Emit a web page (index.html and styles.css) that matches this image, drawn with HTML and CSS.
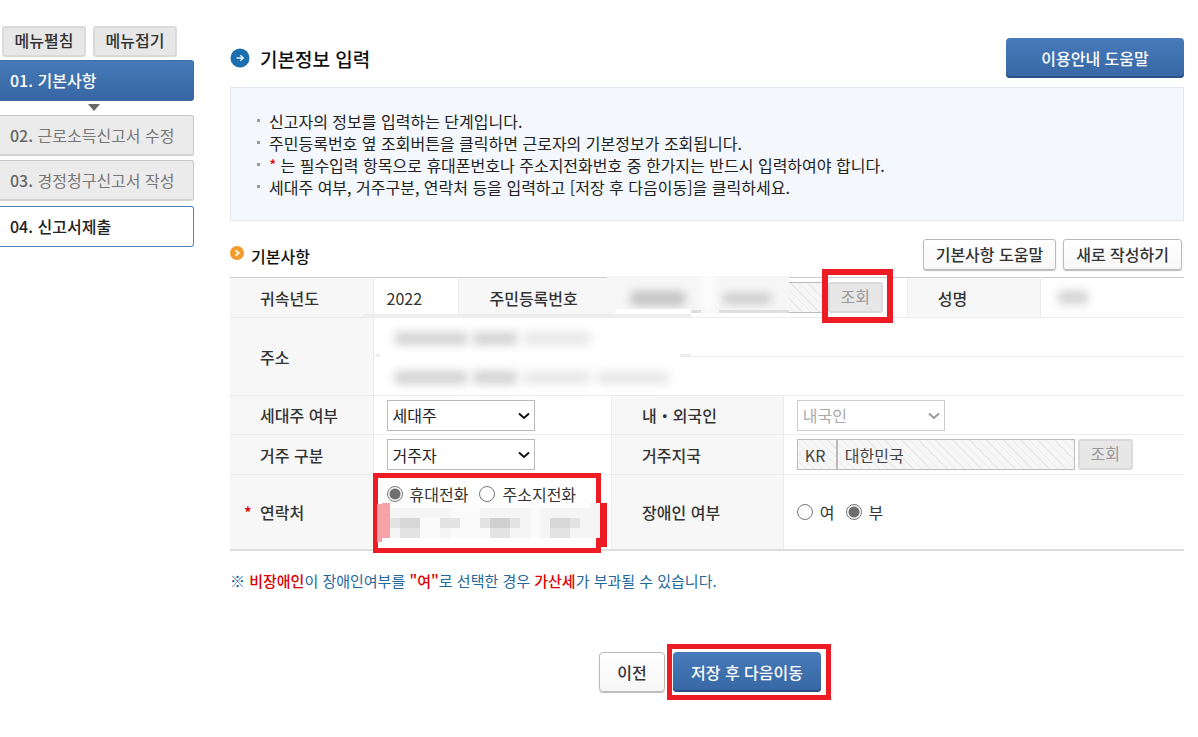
FILE: index.html
```html
<!DOCTYPE html>
<html lang="ko">
<head>
<meta charset="utf-8">
<title>기본정보 입력</title>
<link rel="stylesheet" href="styles.css">
</head>
<body>
<div class="page">
  <nav class="side">
    <div class="side-tools">
      <button type="button" class="btn btn-flat">메뉴펼침</button>
      <button type="button" class="btn btn-flat">메뉴접기</button>
    </div>
    <a class="step step-on" href="#s1">01. 기본사항</a>
    <svg class="step-arrow" width="12" height="7" viewBox="0 0 12 7"><path d="M0 0h12L6 7z" fill="#666"/></svg>
    <a class="step step-off" href="#s2"><b>02.</b> 근로소득신고서 수정</a>
    <a class="step step-off" href="#s3"><b>03.</b> 경정청구신고서 작성</a>
    <a class="step step-next" href="#s4">04. 신고서제출</a>
  </nav>

  <main class="main">
    <header class="title-row">
      <svg width="20" height="20" viewBox="0 0 20 20"><circle cx="10" cy="10" r="9.5" fill="#1b6fae"/><path d="M6.5 10h6.5M10.3 7.2l2.9 2.8-2.9 2.8" fill="none" stroke="#e6f2fa" stroke-width="1.5"/></svg>
      <h1>기본정보 입력</h1>
      <button type="button" class="btn btn-blue btn-help">이용안내 도움말</button>
    </header>

    <ul class="guide">
      <li>신고자의 정보를 입력하는 단계입니다.</li>
      <li>주민등록번호 옆 조회버튼을 클릭하면 근로자의 기본정보가 조회됩니다.</li>
      <li><span class="req">*</span> 는 필수입력 항목으로 휴대폰번호나 주소지전화번호 중 한가지는 반드시 입력하여야 합니다.</li>
      <li>세대주 여부, 거주구분, 연락처 등을 입력하고 [저장 후 다음이동]을 클릭하세요.</li>
    </ul>

    <div class="section-row">
      <svg width="14" height="14" viewBox="0 0 14 14"><circle cx="7" cy="7" r="7" fill="#f59a2b"/><path d="M5.5 4.2L8.7 7 5.5 9.8" fill="none" stroke="#fff3dc" stroke-width="2"/></svg>
      <h2>기본사항</h2>
      <button type="button" class="btn btn-white">기본사항 도움말</button>
      <button type="button" class="btn btn-white">새로 작성하기</button>
    </div>

    <table class="form">
      <colgroup><col class="c1"><col class="c2"><col class="c3"><col class="c4"><col class="c5"><col class="c6"><col class="c7"></colgroup>
      <tr class="roomy">
        <th scope="row">귀속년도</th>
        <td>2022</td>
        <th scope="row">주민등록번호</th>
        <td colspan="2" class="cell-id">
          <div class="id-line">
            <div class="id-field hatch">
              <svg class="id-mask" viewBox="0 0 182 38" width="182" height="38">
                <defs><filter id="soft" x="-20%" y="-60%" width="140%" height="220%"><feGaussianBlur stdDeviation="5 4"/></filter></defs>
                <rect width="182" height="37" fill="#f6f6f6"/>
                <g filter="url(#soft)"><rect x="24" y="15" width="54" height="15" fill="#c6c6c6"/><rect x="116" y="17" width="48" height="11" fill="#cdcdcd"/><rect x="96" width="10" height="34" fill="#fff"/></g>
                <path d="M84 34h10v3H84zM112 34h70v3h-70z" fill="#dedede"/>
              </svg>
            </div>
            <span class="marked"><button type="button" class="btn btn-flat btn-find" disabled>조회</button><i class="mark"></i></span>
          </div>
        </td>
        <th scope="row">성명</th>
        <td><span class="blot blot-name"></span></td>
      </tr>
      <tr>
        <th scope="row" rowspan="2">주소</th>
        <td colspan="6" class="cell-addr">
          <svg class="addr-mask" viewBox="0 0 330 52" width="330" height="52">
            <path d="M254 0h75v5h-75zM18 44h300v8H18z" fill="#fff"/>
            <path d="M1 5h328v4H1zM14 45h4v3h-4zM318 45h11v3h-11z" fill="#ededed"/>
          </svg>
          <div class="blots"><span class="blot b74"></span><span class="blot b44"></span><span class="blot b60 pale"></span></div>
        </td>
      </tr>
      <tr>
        <td colspan="6"><div class="blots"><span class="blot b74"></span><span class="blot b44"></span><span class="blot b60 pale"></span><span class="blot b74 pale"></span></div></td>
      </tr>
      <tr>
        <th scope="row"><label for="head">세대주 여부</label></th>
        <td colspan="2"><span class="pick"><select id="head"><option>세대주</option><option>세대원</option></select><svg viewBox="0 0 12 8" width="12" height="8"><path d="M1 1.5l5 4.5 5-4.5"/></svg></span></td>
        <th scope="row"><label for="nation">내・외국인</label></th>
        <td colspan="3"><span class="pick pick-off"><select id="nation" disabled><option>내국인</option></select><svg viewBox="0 0 12 8" width="12" height="8"><path d="M1 1.5l5 4.5 5-4.5"/></svg></span></td>
      </tr>
      <tr class="roomy">
        <th scope="row"><label for="reside">거주 구분</label></th>
        <td colspan="2"><span class="pick"><select id="reside"><option>거주자</option><option>비거주자</option></select><svg viewBox="0 0 12 8" width="12" height="8"><path d="M1 1.5l5 4.5 5-4.5"/></svg></span></td>
        <th scope="row"><label for="country">거주지국</label></th>
        <td colspan="3">
          <div class="country">
            <input class="hatch code" type="text" value="KR" aria-label="국가코드" readonly><input id="country" class="hatch name" type="text" value="대한민국" readonly>
            <button type="button" class="btn btn-flat btn-find" disabled>조회</button>
          </div>
        </td>
      </tr>
      <tr class="tall">
        <th scope="row"><span class="star">*</span>연락처</th>
        <td colspan="2" class="cell-tel">
          <div class="radios tel-radios">
            <label><input type="radio" name="tel" checked>휴대전화</label>
            <label><input type="radio" name="tel">주소지전화</label>
          </div>
          <i class="mark mark-tel"></i>
          <svg class="tel-mask" viewBox="0 0 230 45" width="230" height="45">
            <path fill="#f5f5f5" d="M12 0h211v35H12z"/>
            <path fill="#fafafa" d="M73 0h30v35H73zM153 0h10v35h-10zM93 15h20v20H93zM53 15h10v20H43V15z"/>
            <path fill="#fcfcfc" d="M12 0h201v5H12z"/>
            <path fill="#f5a3a8" d="M0 1h5V0h8v35H5v4H0z"/>
            <path fill="#d7d7d7" d="M23 15h20v10H23zM173 15h20v10h-20z"/>
            <path fill="#e3e3e3" d="M13 15h10v10H13zM63 15h20v10H63zM103 15h10v10h-10zM133 15h10v10h-10zM193 15h10v10h-10zM23 25h20v10H23zM113 25h20v10h-20zM173 25h20v10h-20z"/>
            <path fill="#cfcfcf" d="M113 15h20v10h-20z"/>
            <path fill="#ed1c24" d="M223 0h7v44h-7z"/>
          </svg>
        </td>
        <th scope="row">장애인 여부</th>
        <td colspan="3">
          <div class="radios">
            <label><input type="radio" name="dis">여</label>
            <label><input type="radio" name="dis" checked>부</label>
          </div>
        </td>
      </tr>
    </table>

    <p class="note">※ <b>비장애인</b>이 장애인여부를 <b>"여"</b>로 선택한 경우 <b>가산세</b>가 부과될 수 있습니다.</p>

    <div class="actions">
      <button type="button" class="btn btn-white btn-big">이전</button>
      <span class="marked"><button type="button" class="btn btn-blue btn-save">저장 후 다음이동</button><i class="mark"></i></span>
    </div>
  </main>
</div>
</body>
</html>
```
FILE: styles.css
```css
* { box-sizing: border-box; }
body {
  margin: 0;
  background: #fff;
  color: #333;
  font-family: "Noto Sans CJK KR", "Noto Sans", sans-serif;
  font-size: 16px;
  line-height: 22px;
}
button, input, select { font: inherit; color: inherit; margin: 0; }
h1, h2, p, ul { margin: 0; padding: 0; }
a { text-decoration: none; }

.page { display: flex; gap: 36px; padding: 26px 14px 36px 0; }

/* side menu */
.side { flex: 0 0 194px; display: flex; flex-direction: column; }
.side-tools { display: flex; gap: 7px; padding-left: 2px; margin-bottom: 3px; }
.side-tools .btn { width: 84px; }
.step {
  height: 41px;
  padding: 0 10px;
  line-height: 39px;
  border: 1px solid #c6c6c6;
  border-left: 0;
  border-radius: 0 3px 3px 0;
  color: #222;
  white-space: nowrap;
}
.step-on { background: linear-gradient(#4579b8, #3766a3); border-color: #3d6ca8; color: #fff; font-weight: 500; }
.step-arrow { align-self: center; margin: 3px 6px 4px 0; }
.step-off { background: #ebebeb; border-bottom: 2px solid #d2d2d2; color: #777; margin-bottom: 4px; }
.step-off b { font-weight: 500; color: #666; }
.step-next { border-color: #5284c0; font-weight: 500; margin-top: 1px; }

/* buttons */
.btn {
  height: 31px;
  padding: 0 0 2px;
  line-height: 22px;
  font-weight: 500;
  border: 1px solid #ccc;
  border-radius: 3px;
  white-space: nowrap;
}
.btn-flat { background: #e7e7e7; border: 2px solid #dadada; color: #333; padding-bottom: 4px; }
.btn-find { width: 55px; color: #999; font-weight: 400; }
.btn-white { background: linear-gradient(#fff, #f7f7f7); border: 1px solid #bbb; box-shadow: 0 1px 1px #bbb; padding: 0 12px 2px; }
.btn-blue { background: linear-gradient(#487bba, #3767a4); border: 0; box-shadow: inset 0 -2px 0 #2a5085; color: #fff; border-radius: 4px; }
.btn-help { width: 178px; height: 40px; padding: 0; }
.btn-big { width: 66px; height: 40px; border-radius: 4px; padding: 0; }
.btn-save { width: 148px; height: 40px; padding: 0; }

/* heading and guide */
.main { flex: 1; min-width: 0; padding-top: 12px; }
.title-row { display: flex; align-items: center; gap: 10px; }
.title-row h1 { flex: 1; padding-top: 2px; font-size: 19px; font-weight: 500; color: #111; }
.guide {
  list-style: none;
  margin-top: 9px;
  padding: 22px 26px;
  background: #f4f7fc;
  border: 1px solid #e2e8f0;
  color: #222;
}
.guide li { display: flex; gap: 4px; white-space: nowrap; }
.guide li::before { content: ""; width: 3px; height: 3px; margin: 9px 5px 0 0; background: #999; }
.req { color: #d00; }

.section-row { display: flex; align-items: center; gap: 7px; margin: 18px 2px 7px 0; }
.section-row svg { margin-bottom: 4px; }
.section-row h2 { flex: 1; font-size: 16px; font-weight: 500; color: #111; padding-top: 2px; }

/* form table */
.form { width: 100%; table-layout: fixed; border-collapse: collapse; border-top: 1px solid #ccc; border-bottom: 2px solid #ddd; }
.c1 { width: 15%; } .c2 { width: 9%; } .c3 { width: 16%; } .c4 { width: 18%; } .c5 { width: 13%; } .c6 { width: 14%; } .c7 { width: 15%; }
.form th, .form td { height: 39px; padding: 0 0 0 13px; text-align: left; border: 1px solid #ececec; border-width: 1px 0; }
.form th { position: relative; padding-left: 30px; background: #f7f7f7; border-right-width: 1px; border-left-width: 1px; font-weight: 500; white-space: nowrap; }
.form th:first-child { border-left: 0; }
.form tr:first-child th, .form tr:first-child td { border-top-color: #ccc; }
.form .roomy th, .form .roomy td { height: 40px; }
.form .tall th, .form .tall td { height: 75px; }
.star { position: absolute; left: 14px; color: #d00; }

.form .cell-id { padding-left: 0; }
.id-line { display: flex; align-items: center; height: 31px; }
.id-field { position: relative; flex: 1; margin-left: 64px; height: 31px; border: 1px solid #bbb; border-width: 1px 0; }
.id-mask { position: absolute; left: -69px; top: -7px; }
.cell-id .marked { margin-right: 24px; }
.hatch { background: repeating-linear-gradient(45deg, #f6f6f6 0 5px, #e9e9e9 5px 6px); }

.marked { position: relative; display: flex; }
.mark { position: absolute; inset: -13px -10px -10px -6px; border: 6px solid #ed1c24; pointer-events: none; }
.actions .mark { inset: -8px -10px -8px -6px; border-width: 5px; }

.form .cell-addr { position: relative; }
.addr-mask { position: absolute; left: -12px; top: -9px; }
.blot { display: block; width: 40px; height: 13px; background: #d2d2d2; filter: blur(5px); }
.blots { display: flex; gap: 6px; padding: 3px 0 0 8px; }
.blot-name { width: 30px; margin-left: 4px; }
.b74 { width: 72px; } .b44 { width: 44px; } .b60 { width: 68px; }
.pale { background: #e8e8e8; }

.pick { position: relative; display: block; width: 148px; }
.pick select { display: block; width: 100%; height: 31px; padding: 0 5px; appearance: none; background: #fff; border: 1px solid #bbb; border-radius: 0; color: #222; opacity: 1; }
.pick svg { position: absolute; right: 5px; top: 12px; fill: none; stroke: #111; stroke-width: 2; pointer-events: none; }
.pick-off select { color: #aaa; border-color: #ccc; }
.pick-off svg { stroke: #999; }

.country { display: flex; }
.country input { height: 31px; border: 1px solid #bbb; padding: 0 7px; color: #444; }
.country .code { width: 40px; }
.country .name { width: 238px; border-left-width: 1px; margin-right: 3px; }

.radios { display: flex; gap: 11px; }
.radios label { display: flex; align-items: center; gap: 7px; white-space: nowrap; }
.radios input { appearance: none; width: 16px; height: 16px; border: 1px solid #767676; border-radius: 50%; background: #fff; }
.radios input:checked { background: radial-gradient(circle, #6f6f6f 0 5px, #fff 6px); }
.form .cell-tel { position: relative; vertical-align: top; padding-top: 8px; }
.mark-tel { inset: -2px auto -4px -1px; width: 228px; border-width: 5px; }
.tel-mask { position: absolute; left: 3px; top: 28px; }

.note { margin-top: 19px; font-size: 15px; color: #23689b; }
.note b { font-weight: 500; color: #d00; }

.actions { display: flex; justify-content: center; gap: 8px; margin-top: 60px; padding-left: 6px; }
```
